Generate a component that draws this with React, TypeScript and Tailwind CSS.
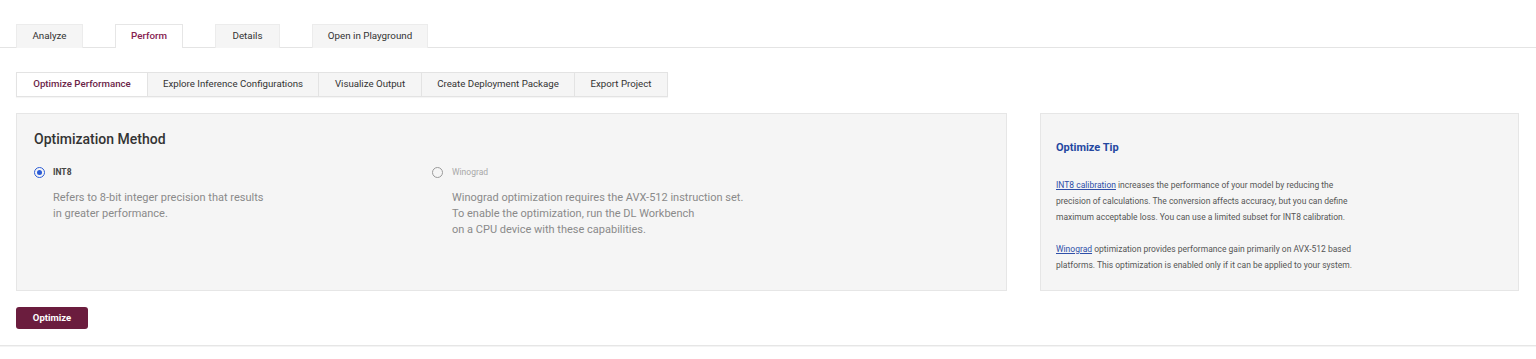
import React from "react";

const topTabs = [
  { label: "Analyze", w: "w-[67px]", active: false },
  { label: "Perform", w: "w-[68px]", active: true },
  { label: "Details", w: "w-[65px]", active: false },
  { label: "Open in Playground", w: "w-[116px]", active: false },
];

const subTabs = [
  { label: "Optimize Performance", w: "w-[130px]", active: true },
  { label: "Explore Inference Configurations", w: "w-[171px]", active: false },
  { label: "Visualize Output", w: "w-[103px]", active: false },
  { label: "Create Deployment Package", w: "w-[153px]", active: false },
  { label: "Export Project", w: "w-[93px]", active: false },
];

export default function App() {
  return (
    <div className="w-[1536px] h-[359px] bg-white font-['Roboto',_'Liberation_Sans',_sans-serif] text-[#333] overflow-hidden">
      {/* Top tabs */}
      <div className="pt-[24px] border-b border-[#e4e4e4] flex gap-[32px] pl-[16px]">
        {topTabs.map((t) => (
          <div
            key={t.label}
            className={`${t.w} h-[24px] -mb-px flex items-center justify-center text-[9.8px] border border-b-0 ${
              t.active
                ? "bg-white border-[#e6e6e6] text-[#86214f] font-medium border-b border-b-white"
                : "bg-[#f5f5f5] border-[#ececec] text-[#333]"
            }`}
          >
            {t.label}
          </div>
        ))}
      </div>

      {/* Sub tabs */}
      <div className="mt-[24px] ml-[16px] flex">
        <div className="flex border border-[#e3e3e3] shadow-[0_1px_1px_rgba(0,0,0,0.04)]">
          {subTabs.map((t, i) => (
            <div
              key={t.label}
              className={`${t.w} h-[23px] flex items-center justify-center text-[9.7px] ${
                i > 0 ? "border-l border-[#e3e3e3]" : ""
              } ${t.active ? "bg-white text-[#6b2447] font-medium" : "bg-[#f5f5f5] text-[#333]"}`}
            >
              {t.label}
            </div>
          ))}
        </div>
      </div>

      {/* Panels */}
      <div className="mt-[16px] ml-[16px] flex gap-[33px]">
        <div className="w-[991px] h-[178px] bg-[#f5f5f5] border border-[#e6e6e6] pt-[15px] pl-[17px]">
          <div className="h-[20px] leading-[20px] text-[14px] font-medium text-[#333]">
            Optimization Method
          </div>
          <div className="flex mt-[16px]">
            <div className="w-[398px]">
              <div className="flex items-center h-[14px]">
                <span className="w-[11px] h-[11px] rounded-full border-[1.5px] border-[#2b5cd6] flex items-center justify-center">
                  <span className="w-[5px] h-[5px] rounded-full bg-[#2b5cd6]" />
                </span>
                <span className="ml-[8px] text-[8.5px] font-bold text-[#444]">INT8</span>
              </div>
              <div className="mt-[11px] pl-[19px] text-[11px] leading-[16px] text-[#8a8a8a] whitespace-nowrap">
                Refers to 8-bit integer precision that results
                <br />
                in greater performance.
              </div>
            </div>
            <div>
              <div className="flex items-center h-[14px]">
                <span className="w-[11px] h-[11px] rounded-full border-[1.5px] border-[#9a9a9a]" />
                <span className="ml-[9px] text-[8.5px] text-[#a8a8a8]">Winograd</span>
              </div>
              <div className="mt-[11px] pl-[20px] text-[11px] leading-[16px] text-[#8a8a8a] whitespace-nowrap">
                Winograd optimization requires the AVX-512 instruction set.
                <br />
                To enable the optimization, run the DL Workbench
                <br />
                on a CPU device with these capabilities.
              </div>
            </div>
          </div>
        </div>

        <div className="w-[479px] h-[178px] bg-[#f5f5f5] border border-[#e6e6e6] pt-[26px] pl-[15px]">
          <div className="h-[16px] leading-[16px] text-[11px] font-bold text-[#2447a0]">Optimize Tip</div>
          <div className="mt-[21px] text-[8.5px] leading-[16px] text-[#555] whitespace-nowrap">
            <a className="text-[#2f4fa8] underline">INT8 calibration</a> increases the performance of your model by reducing the
            <br />
            precision of calculations. The conversion affects accuracy, but you can define
            <br />
            maximum acceptable loss. You can use a limited subset for INT8 calibration.
          </div>
          <div className="mt-[16px] text-[8.5px] leading-[16px] text-[#555] whitespace-nowrap">
            <a className="text-[#2f4fa8] underline">Winograd</a> optimization provides performance gain primarily on AVX-512 based
            <br />
            platforms. This optimization is enabled only if it can be applied to your system.
          </div>
        </div>
      </div>

      {/* Button */}
      <div className="mt-[16px] ml-[16px]">
        <button className="w-[72px] h-[22px] rounded-[3px] bg-[#6b1d3e] text-white text-[9.5px] font-bold flex items-center justify-center">
          Optimize
        </button>
      </div>

      <div className="mt-[16px] h-px bg-[#e6e6e6]" />
      <div className="h-px bg-[#f4f4f4]" />
    </div>
  );
}
